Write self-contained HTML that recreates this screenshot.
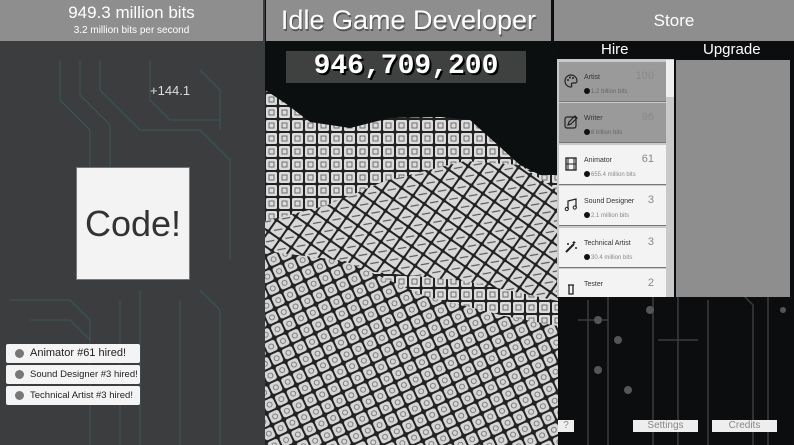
<!DOCTYPE html>
<html><head><meta charset="utf-8"><style>
*{margin:0;padding:0;box-sizing:border-box}
body{width:794px;height:445px;overflow:hidden;position:relative;background:#0c0f10;font-family:"Liberation Sans",sans-serif}
.abs{position:absolute}
.bar{position:absolute;top:0;height:41px;background:#8e8e8e;color:#fff;text-align:center}
.item{position:absolute;left:559px;width:107px;height:40px;background:#f3f3f3;border-bottom:1px solid #777}
.item.dim{background:#9a9a9a}
.item .n{position:absolute;left:25px;top:12px;font-size:7px;color:#333}
.item .c{position:absolute;right:12px;top:8px;font-size:11px;color:#888}
.item .p{position:absolute;left:25px;top:26px;font-size:6px;color:#888}
.item.dim .p{color:#666}
.item .p:before{content:"";display:inline-block;width:6px;height:6px;border-radius:50%;background:#111;margin-right:1px;vertical-align:-1px}
.item svg{position:absolute;left:5px;top:12px}
.toast{position:absolute;left:6px;width:134px;height:19px;background:#f4f4f4;border-radius:2px;font-size:9.5px;color:#222;line-height:19px;padding-left:24px}
.toast:before{content:"";position:absolute;left:9px;top:5px;width:9px;height:9px;border-radius:50%;background:#777}
.btn{position:absolute;top:420px;height:12px;background:#eee;color:#888;font-size:10px;text-align:center;line-height:12px}
</style></head><body>
<div class="abs" style="left:0;top:0;width:265px;height:445px;background:#3b3d3e"></div>
<svg class="abs" style="left:0;top:0" width="265" height="445"><g stroke="#3f5e62" stroke-width="1" fill="none" opacity=".8">
<path d="M60 60v40l30 30v60M80 60v35l30 30v50M100 60v30l40 40h60l30 30v100M150 60v40l20 20h50M200 70l20 20v40M10 300h60l20 20v125M30 320h40l20 20v105M120 300v145M140 290v155M180 300v145M200 290l20 20v135"/></g></svg>
<div class="abs" style="left:558px;top:40px;width:236px;height:405px;background:#0b0d0e"></div>
<svg class="abs" style="left:558px;top:40px" width="236" height="405"><g stroke="#3a3d3e" stroke-width="1.5" fill="none">
<path d="M30 260v145M50 250v155M80 240l15 15v150M120 230v175M150 260v145M180 250l15 15v140M210 240v165M20 280h30M100 300h40"/></g>
<g fill="#555"><circle cx="40" cy="280" r="4"/><circle cx="60" cy="300" r="4"/><circle cx="40" cy="330" r="4"/><circle cx="70" cy="350" r="4"/><circle cx="92" cy="270" r="4"/><circle cx="225" cy="270" r="3"/></g>
<circle cx="108" cy="180" r="6" fill="#4b6b70"/></svg>
<!-- center -->
<svg class="abs" style="left:265px;top:41px" width="293" height="404">
<defs>
<pattern id="t" width="13" height="13" patternUnits="userSpaceOnUse"><rect width="13" height="13" fill="#222"/><rect x="1" y="1" width="11" height="11" rx="1.5" fill="#dcdcdc"/><rect x="4" y="4" width="5" height="5" fill="none" stroke="#555" stroke-width=".8"/></pattern>
<pattern id="t2" width="14" height="14" patternUnits="userSpaceOnUse" patternTransform="rotate(35)"><rect width="14" height="14" fill="#222"/><rect x="1" y="1" width="12" height="12" rx="1.5" fill="#d8d8d8"/><path d="M4 10L10 4" stroke="#555" stroke-width="1.2"/></pattern>
<pattern id="t3" width="13" height="13" patternUnits="userSpaceOnUse" patternTransform="rotate(-25)"><rect width="13" height="13" fill="#222"/><rect x="1" y="1" width="11" height="11" rx="2.5" fill="#d6d6d6"/><circle cx="6.5" cy="6.5" r="2.5" fill="none" stroke="#666" stroke-width=".8"/></pattern>
</defs>
<path d="M0 49L20 62L45 81L85 87L125 77L175 76L205 79L255 124L275 134L293 134V404H0Z" fill="url(#t)"/>
<path d="M0 180L60 165L120 140L200 120L255 124L293 150V260L200 240L100 230L0 215Z" fill="url(#t2)"/>
<path d="M0 210L80 220L160 255L240 275L293 285V404H0Z" fill="url(#t3)"/>
</svg>
<!-- top bars -->
<div class="bar" style="left:0;width:263px"><div style="font-size:17px;margin-top:3px">949.3 million bits</div><div style="font-size:10px;margin-top:2px">3.2 million bits per second</div></div>
<div class="bar" style="left:266px;width:285px;font-size:27px;line-height:41px;text-shadow:1px 2px 0 #555">Idle Game Developer</div>
<div class="bar" style="left:554px;width:240px;font-size:17px;line-height:41px">Store</div>
<div class="abs" style="left:286px;top:51px;width:240px;height:32px;background:#444;opacity:.92"></div>
<div class="abs" style="left:286px;top:51px;width:240px;height:32px;color:#fff;font-family:'Liberation Mono',monospace;font-weight:bold;font-size:28px;text-align:center;line-height:32px;text-shadow:2px 2px 0 #000">946,709,200</div>
<div class="abs" style="left:150px;top:83px;color:#ddd;font-size:13px">+144.1</div>
<div class="abs" style="left:601px;top:41px;color:#fff;font-size:15px">Hire</div>
<div class="abs" style="left:703px;top:41px;color:#fff;font-size:15px">Upgrade</div>
<!-- code -->
<div class="abs" style="left:76px;top:167px;width:114px;height:113px;background:#f3f3f3;border:1px solid #777;font-size:36px;color:#333;text-align:center;line-height:111px">Code!</div>
<!-- store -->
<div class="abs" style="left:557px;top:59px;width:117px;height:238px;background:#c9c9c9"></div>
<div class="abs" style="left:666px;top:60px;width:8px;height:37px;background:#eee"></div>
<div class="abs" style="left:676px;top:60px;width:114px;height:237px;background:#8e8e8e"></div>
<div class="item dim" style="top:62px"><svg width="14" height="14" viewBox="0 0 14 14"><path d="M7 1a6 6 0 100 12c1 0 1-1 .5-2s0-2 1.5-2h2a2 2 0 002-2A6 6 0 007 1z" fill="none" stroke="#222" stroke-width="1.2"/><circle cx="4" cy="6" r="1" fill="#222"/><circle cx="6" cy="3.5" r="1" fill="#222"/><circle cx="9" cy="4" r="1" fill="#222"/></svg><span class="n">Artist</span><span class="c">100</span><span class="p">1.2 billion bits</span></div>
<div class="item dim" style="top:103px"><svg width="14" height="14" viewBox="0 0 14 14"><rect x="1" y="2" width="11" height="11" rx="2" fill="none" stroke="#222" stroke-width="1.2"/><path d="M4 10l1-3 6-6 2 2-6 6z" fill="none" stroke="#222" stroke-width="1.2"/></svg><span class="n">Writer</span><span class="c">96</span><span class="p">8 billion bits</span></div>
<div class="item" style="top:145px"><svg width="14" height="14" viewBox="0 0 14 14"><rect x="2" y="1" width="10" height="12" fill="none" stroke="#222" stroke-width="1.3"/><path d="M4 1v12M10 1v12M2 7h10" stroke="#222"/></svg><span class="n">Animator</span><span class="c">61</span><span class="p">655.4 million bits</span></div>
<div class="item" style="top:186px"><svg width="14" height="14" viewBox="0 0 14 14"><path d="M4 11V3l8-2v8" fill="none" stroke="#222" stroke-width="1.2"/><circle cx="2.8" cy="11" r="1.6" fill="none" stroke="#222"/><circle cx="10.8" cy="9.5" r="1.6" fill="none" stroke="#222"/></svg><span class="n">Sound Designer</span><span class="c">3</span><span class="p">2.1 million bits</span></div>
<div class="item" style="top:228px"><svg width="14" height="14" viewBox="0 0 14 14"><path d="M2 12l8-8" stroke="#222" stroke-width="2"/><path d="M10 1v3M8.5 2.5h3M4 3v2M3 4h2M12 7v2M11 8h2" stroke="#222"/></svg><span class="n">Technical Artist</span><span class="c">3</span><span class="p">30.4 million bits</span></div>
<div class="item" style="top:269px;height:28px;border:0"><svg width="14" height="14" viewBox="0 0 14 14"><path d="M4 4h6M5 4v9h4V4" fill="none" stroke="#222" stroke-width="1.3"/></svg><span class="n">Tester</span><span class="c">2</span></div>
<!-- toasts -->
<div class="toast" style="top:344px;font-size:11px">Animator #61 hired!</div>
<div class="toast" style="top:365px">Sound Designer #3 hired!</div>
<div class="toast" style="top:386px">Technical Artist #3 hired!</div>
<div class="btn" style="left:558px;width:16px">?</div>
<div class="btn" style="left:633px;width:65px">Settings</div>
<div class="btn" style="left:712px;width:65px">Credits</div>
</body></html>
